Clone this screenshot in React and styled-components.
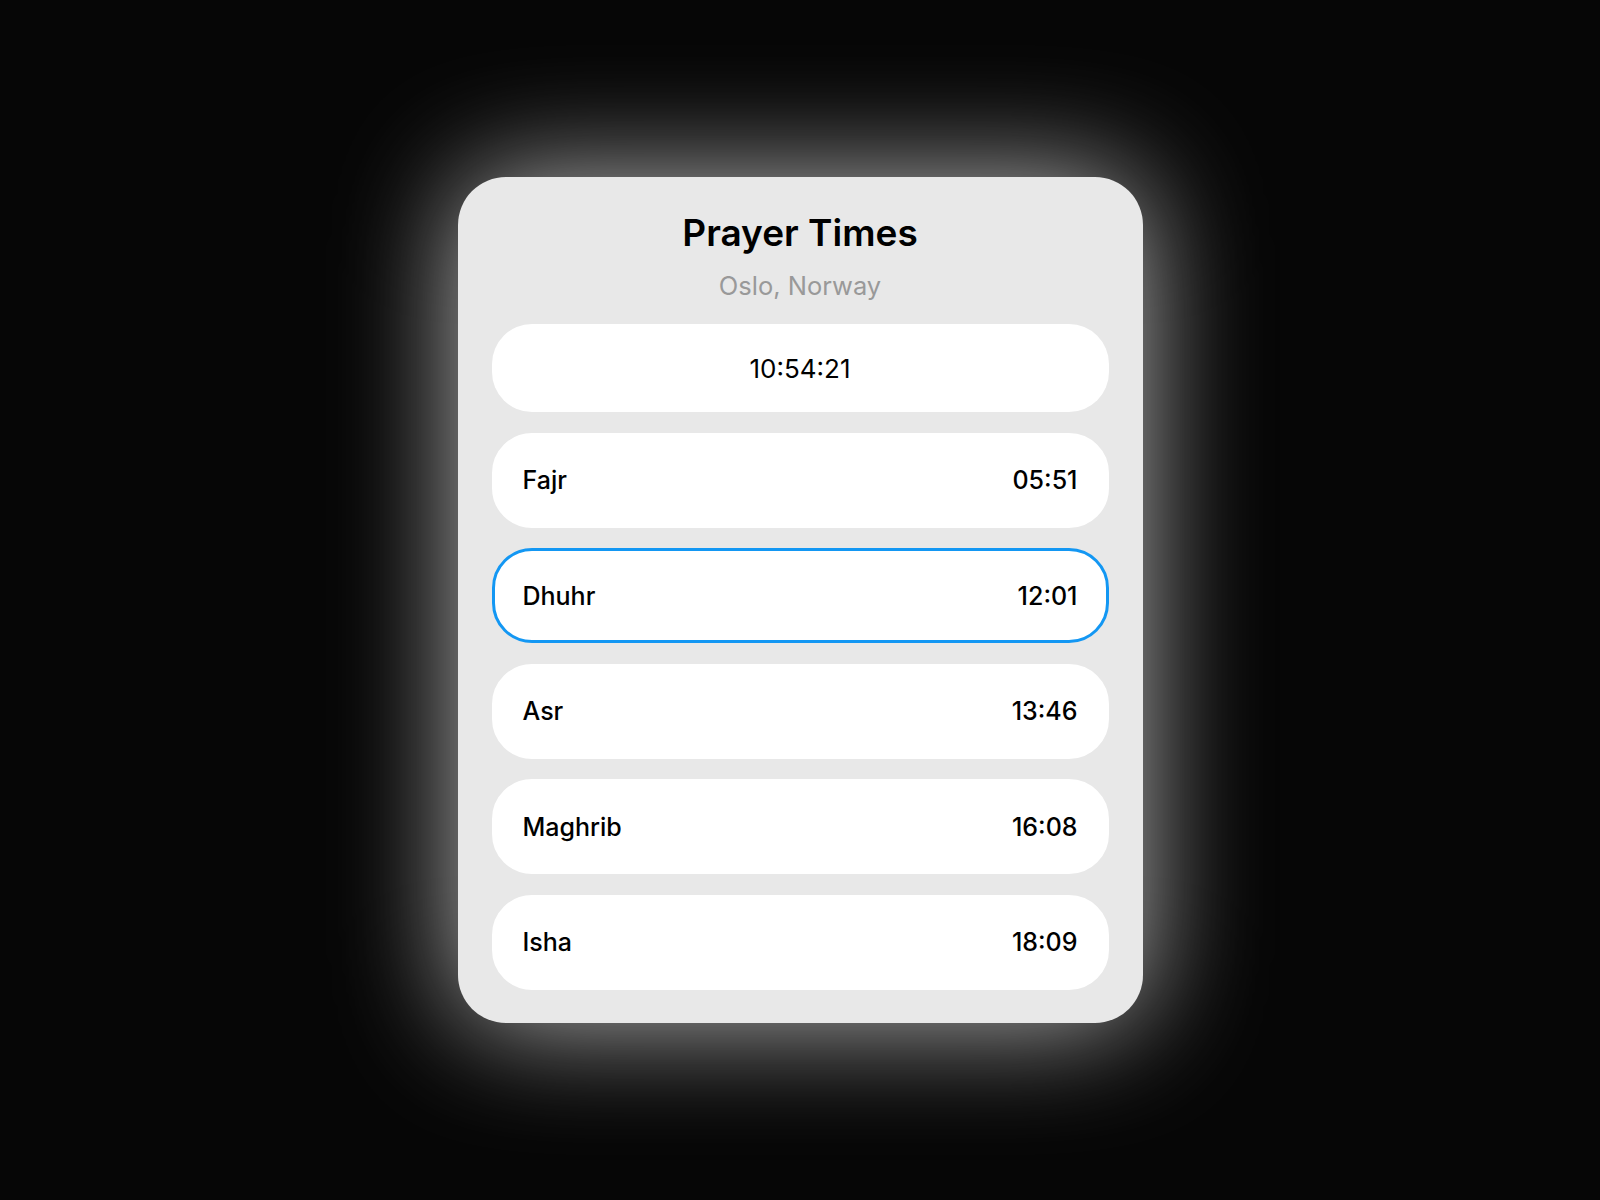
import React from 'react'
import styled, { createGlobalStyle } from 'styled-components'

const GlobalStyle = createGlobalStyle`
  * { box-sizing: border-box; }
  html, body {
    margin: 0;
    padding: 0;
    background: #060606;
  }
  body {
    font-family: Inter, "Noto Sans", "Liberation Sans", sans-serif;
    color: #0a0a0a;
  }
`

const Page = styled.main`
  min-height: 1200px;
  display: flex;
  align-items: center;
  justify-content: center;
`

const Card = styled.section`
  width: 685px;
  padding: 34px 34px 33px;
  background: #e8e8e8;
  border-radius: 48px;
  box-shadow: 0 0 120px rgba(255, 255, 255, 0.72);
  display: flex;
  flex-direction: column;
`

const Title = styled.h1`
  margin: 0;
  font-size: 37px;
  line-height: 44px;
  font-weight: 600;
  text-align: center;
  color: #000;
`

const Location = styled.p`
  margin: 15px 0 22px;
  font-size: 25.5px;
  line-height: 32px;
  font-weight: 400;
  text-align: center;
  color: #999;
`

const Clock = styled.div`
  height: 88px;
  border-radius: 40px;
  background: #fff;
  display: flex;
  align-items: center;
  justify-content: center;
  font-size: 26px;
  font-weight: 400;
  color: #000;
`

const List = styled.ul`
  list-style: none;
  margin: 20.5px 0 0;
  padding: 0;
  display: flex;
  flex-direction: column;
  gap: 20.5px;
`

const Row = styled.li`
  height: 95px;
  padding: 0 28px;
  border-radius: 40px;
  background: #fff;
  border: 3px solid ${p => (p.$active ? '#1397f3' : '#fff')};
  display: flex;
  align-items: center;
  justify-content: space-between;
  font-size: 25px;
  font-weight: 500;
  color: #000;
`

const prayers = [
  { name: 'Fajr', time: '05:51' },
  { name: 'Dhuhr', time: '12:01', next: true },
  { name: 'Asr', time: '13:46' },
  { name: 'Maghrib', time: '16:08' },
  { name: 'Isha', time: '18:09' },
]

export default function App() {
  return (
    <>
      <GlobalStyle />
      <Page>
        <Card>
          <Title>Prayer Times</Title>
          <Location>Oslo, Norway</Location>
          <Clock>10:54:21</Clock>
          <List>
            {prayers.map(p => (
              <Row key={p.name} $active={p.next}>
                <span>{p.name}</span>
                <span>{p.time}</span>
              </Row>
            ))}
          </List>
        </Card>
      </Page>
    </>
  )
}
